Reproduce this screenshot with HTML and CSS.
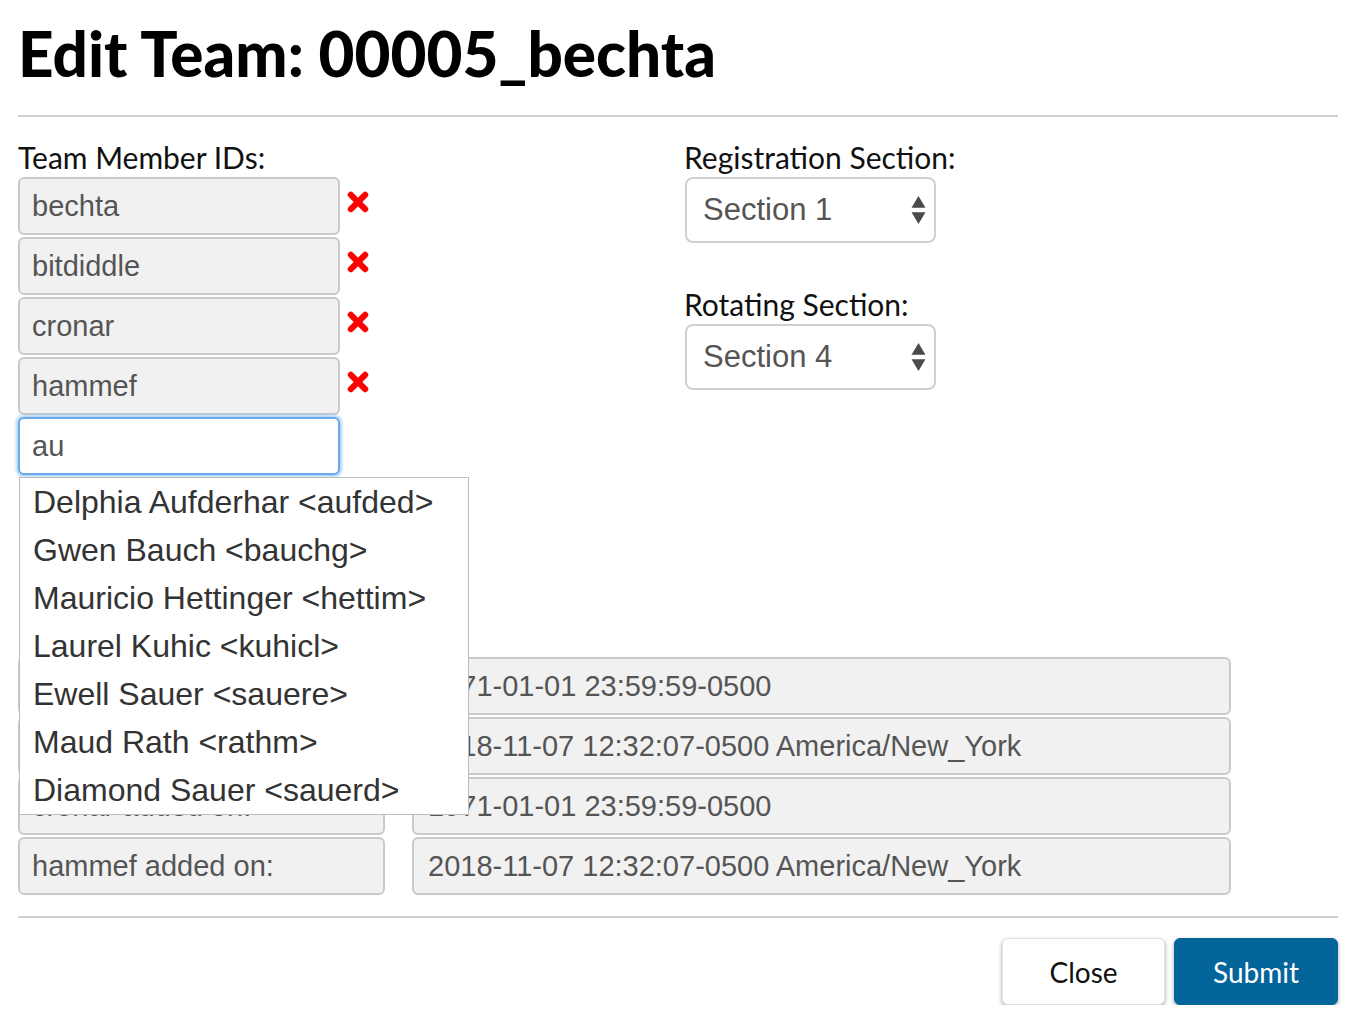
FILE: index.html
```html
<!DOCTYPE html>
<html>
<head>
<meta charset="utf-8">
<link rel="stylesheet" href="styles.css">
</head>
<body>
<div class="page">
  <h1 class="title">Edit Team: 00005_bechta</h1>
  <hr class="rule">
  <div class="top">
    <div class="col-members">
      <div class="label">Team Member IDs:</div>
      <div class="member-row"><input class="field" value="bechta" readonly><svg class="rm" viewBox="0 0 20 20"><path d="M3.5 3.5 L16.5 16.5 M16.5 3.5 L3.5 16.5"/></svg></div>
      <div class="member-row"><input class="field" value="bitdiddle" readonly><svg class="rm" viewBox="0 0 20 20"><path d="M3.5 3.5 L16.5 16.5 M16.5 3.5 L3.5 16.5"/></svg></div>
      <div class="member-row"><input class="field" value="cronar" readonly><svg class="rm" viewBox="0 0 20 20"><path d="M3.5 3.5 L16.5 16.5 M16.5 3.5 L3.5 16.5"/></svg></div>
      <div class="member-row"><input class="field" value="hammef" readonly><svg class="rm" viewBox="0 0 20 20"><path d="M3.5 3.5 L16.5 16.5 M16.5 3.5 L3.5 16.5"/></svg></div>
      <div class="member-row new-row">
        <input class="field active" value="au">
        <ul class="suggest">
          <li>Delphia Aufderhar &lt;aufded&gt;</li>
          <li>Gwen Bauch &lt;bauchg&gt;</li>
          <li>Mauricio Hettinger &lt;hettim&gt;</li>
          <li>Laurel Kuhic &lt;kuhicl&gt;</li>
          <li>Ewell Sauer &lt;sauere&gt;</li>
          <li>Maud Rath &lt;rathm&gt;</li>
          <li>Diamond Sauer &lt;sauerd&gt;</li>
        </ul>
      </div>
    </div>
    <div class="col-sections">
      <div class="label">Registration Section:</div>
      <div class="select">
        <span>Section 1</span>
        <svg class="arrows" viewBox="0 0 14 28"><path d="M7 1 L13.5 12 L0.5 12 Z M0.5 16 L13.5 16 L7 27 Z"/></svg>
      </div>
      <div class="label label-gap">Rotating Section:</div>
      <div class="select">
        <span>Section 4</span>
        <svg class="arrows" viewBox="0 0 14 28"><path d="M7 1 L13.5 12 L0.5 12 Z M0.5 16 L13.5 16 L7 27 Z"/></svg>
      </div>
    </div>
  </div>
  <div class="added">
    <input class="field f-left" value="bechta added on:" readonly>
    <input class="field f-right" value="1971-01-01 23:59:59-0500" readonly>
    <input class="field f-left" value="bitdiddle added on:" readonly>
    <input class="field f-right" value="2018-11-07 12:32:07-0500 America/New_York" readonly>
    <input class="field f-left" value="cronar added on:" readonly>
    <input class="field f-right" value="1971-01-01 23:59:59-0500" readonly>
    <input class="field f-left" value="hammef added on:" readonly>
    <input class="field f-right" value="2018-11-07 12:32:07-0500 America/New_York" readonly>
  </div>
  <hr class="rule rule-bottom">
  <div class="footer">
    <button class="btn btn-close">Close</button>
    <button class="btn btn-submit">Submit</button>
  </div>
</div>
</body>
</html>
```
FILE: styles.css
```css
html, body {
  margin: 0;
  padding: 0;
  background: #ffffff;
}
body {
  font-family: Lato, "Open Sans", sans-serif;
  color: #111;
}
.page {
  padding: 0 12px 0 18px;
}
.title {
  margin: 0;
  padding-top: 16px;
  font-family: Lato, sans-serif;
  font-weight: 900;
  font-size: 62px;
  line-height: 1.2;
  color: #000;
}
.rule {
  border: 0;
  height: 2px;
  background: #d2d2d2;
  margin: 25px 0 0 0;
}
.top {
  display: flex;
  margin-top: 22px;
}
.label {
  font-family: Lato, sans-serif;
  font-size: 30px;
  line-height: 36px;
  color: #111;
  margin-bottom: 2px;
}
.col-members {
  width: 666px;
  display: flex;
  flex-direction: column;
  gap: 2px;
}
.col-members .label {
  margin-bottom: 0;
}
.member-row {
  display: flex;
  align-items: center;
  gap: 7px;
  position: relative;
}
.field {
  box-sizing: border-box;
  height: 58px;
  border: 2px solid #cacaca;
  border-radius: 6px;
  background: #f1f1f1;
  padding: 0 12px;
  font-family: "Liberation Sans", Arial, sans-serif;
  font-size: 29px;
  color: #555;
  outline: none;
  margin: 0;
}
.member-row .field {
  width: 322px;
}
.rm {
  width: 22px;
  height: 22px;
  margin-top: -8px;
  fill: none;
  stroke: #ff0000;
  stroke-width: 5.6;
  stroke-linecap: round;
}
.field.active {
  background: #ffffff;
  border-color: #6aaaea;
  box-shadow: 0 0 3px 2px rgba(102, 175, 233, 0.55);
}
.suggest {
  position: absolute;
  top: 60px;
  left: 1px;
  width: 450px;
  margin: 0;
  padding: 0;
  list-style: none;
  background: #fff;
  border: 1px solid #bdbdbd;
  box-sizing: border-box;
  z-index: 5;
}
.suggest li {
  height: 48px;
  line-height: 48px;
  padding-left: 13px;
  font-family: "Liberation Sans", Arial, sans-serif;
  font-size: 32px;
  color: #333;
  white-space: nowrap;
}
.col-sections {
  display: flex;
  flex-direction: column;
}
.label-gap {
  margin-top: 43px;
}
.select {
  box-sizing: border-box;
  width: 251px;
  height: 66px;
  margin-left: 1px;
  border: 2px solid #d0d0d0;
  border-radius: 8px;
  background: #fff;
  display: flex;
  align-items: center;
  justify-content: space-between;
  padding: 0 8px 0 16px;
  font-family: "Liberation Sans", Arial, sans-serif;
  font-size: 31px;
  color: #555;
}
.arrows {
  width: 15px;
  height: 30px;
  fill: #4a4a4a;
}
.added {
  display: grid;
  grid-template-columns: 367px 819px;
  column-gap: 27px;
  row-gap: 2px;
  margin-top: 182px;
}
.f-left, .f-right {
  width: 100%;
}
.f-right {
  padding-left: 14px;
}
.rule-bottom {
  margin-top: 21px;
}
.footer {
  display: flex;
  justify-content: flex-end;
  gap: 9px;
  margin-top: 20px;
}
.btn {
  height: 67px;
  border-radius: 6px;
  font-family: Lato, sans-serif;
  font-size: 28px;
  cursor: pointer;
  box-shadow: 0 2px 4px rgba(0, 0, 0, 0.35);
}
.btn-close {
  width: 163px;
  background: #ffffff;
  border: 1px solid #e2e2e2;
  color: #111;
}
.btn-submit {
  width: 164px;
  background: #04659b;
  border: 1px solid #04659b;
  color: #ffffff;
}
```
